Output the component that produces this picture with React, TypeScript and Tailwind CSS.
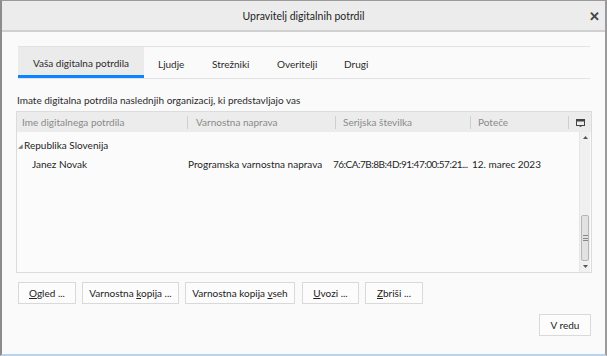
import React from "react";

const font = { fontFamily: 'Lato, "Noto Sans", sans-serif' };

function Btn({ children, className = "" }: { children: React.ReactNode; className?: string }) {
  return (
    <div
      className={
        "h-[22px] flex items-center justify-center border border-[#d9d9d9] bg-[#fcfcfc] text-[10px] text-[#222] pt-[1px] " +
        className
      }
    >
      {children}
    </div>
  );
}

export default function App() {
  return (
    <div
      className="w-[607px] h-[356px] flex flex-col bg-[#fafafa] border-l-2 border-t border-r-2 border-b-2 border-l-[#8c8c8c] border-t-[#9a9a9a] border-r-[#9a9a9a] border-b-[#b9d3ea] overflow-hidden"
      style={font}
    >
      {/* Title bar */}
      <div className="h-[31px] shrink-0 relative flex items-center justify-center bg-[#ececec] border-b-2 border-[#d0d0d0]">
        <span className="text-[10.5px] text-[#1e1e1e] pt-[3px]">Upravitelj digitalnih potrdil</span>
        <span className="absolute right-[5px] top-[9px] text-[13px] leading-none font-bold text-[#444]">✕</span>
      </div>

      <div className="flex flex-col pl-[14px] pr-[13px]">
        {/* Tabs */}
        <div className="mt-[14px] ml-[2px] mr-[2px] h-[33px] flex border-t border-b border-[#e2e2e2] text-[10px] text-[#2a2a2a]">
          <div className="w-[126px] h-full flex items-center justify-center bg-[#ebebeb] border-b-[3px] border-[#0a84ff] pt-[5px]">
            Vaša digitalna potrdila
          </div>
          <div className="flex items-center pt-[3px]">
            <span className="ml-[14px] w-[54px]">Ljudje</span>
            <span className="w-[65px]">Strežniki</span>
            <span className="w-[67px]">Overitelji</span>
            <span>Drugi</span>
          </div>
        </div>

        <div className="mt-[14px] ml-[1px] text-[10px] text-[#2a2a2a] leading-[14px]">
          Imate digitalna potrdila naslednjih organizacij, ki predstavljajo vas
        </div>

        {/* List box */}
        <div className="mt-[4px] h-[162px] border border-[#dcdcdc] bg-[#fbfbfb] flex flex-col">
          <div className="h-[20px] shrink-0 flex items-center bg-[#ececec] text-[10px] text-[#8a8a8a] pt-[1px]">
            <div className="w-[170px] pl-[5px]">Ime digitalnega potrdila</div>
            <div className="h-[13px] w-px bg-[#cfcfcf]" />
            <div className="w-[147px] pl-[8px]">Varnostna naprava</div>
            <div className="h-[13px] w-px bg-[#cfcfcf]" />
            <div className="w-[134px] pl-[7px]">Serijska številka</div>
            <div className="h-[13px] w-px bg-[#cfcfcf]" />
            <div className="w-[97px] pl-[7px]">Poteče</div>
            <div className="h-[13px] w-px bg-[#cfcfcf]" />
            <div className="flex-1 flex justify-center">
              <svg width="9" height="8" viewBox="0 0 9 8">
                <rect x="0.5" y="0.5" width="8" height="6" fill="none" stroke="#444" />
                <rect x="0.5" y="0.5" width="8" height="2" fill="#444" />
                <path d="M3 7h3l-1.5 1z" fill="#444" />
              </svg>
            </div>
          </div>
          <div className="flex flex-1 min-h-0">
            <div className="flex-1 text-[10px] text-[#1e1e1e]">
              <div className="h-[19px] flex items-center mt-[4px] pl-[1px]">
                <span className="text-[6px] text-[#777] mr-[1px]">◢</span>Republika Slovenija
              </div>
              <div className="h-[19px] flex items-center whitespace-nowrap">
                <span className="w-[171px] pl-[15px]">Janez Novak</span>
                <span className="w-[145px]">Programska varnostna naprava</span>
                <span className="w-[139px] tracking-[-0.5px]">76:CA:7B:8B:4D:91:47:00:57:21...</span>
                <span>12. marec 2023</span>
              </div>
            </div>
            {/* Scrollbar */}
            <div className="w-[11px] mr-[1px] flex flex-col bg-[#f0f0f0] border-l border-[#e6e6e6]">
              <div className="h-[10px] flex items-center justify-center">
                <svg width="5" height="3" viewBox="0 0 5 3"><path d="M0 3h5L2.5 0z" fill="#555" /></svg>
              </div>
              <div className="flex-1" />
              <div className="h-[46px] mx-[1px] rounded-[2px] border border-[#b5b5b5] bg-[#e2e2e2] flex items-center justify-center">
                <div className="w-[5px] h-[6px] flex flex-col justify-between">
                  <div className="h-px bg-[#888]" />
                  <div className="h-px bg-[#888]" />
                  <div className="h-px bg-[#888]" />
                </div>
              </div>
              <div className="h-[11px] flex items-center justify-center">
                <svg width="5" height="3" viewBox="0 0 5 3"><path d="M0 0h5L2.5 3z" fill="#555" /></svg>
              </div>
            </div>
          </div>
        </div>

        {/* Buttons */}
        <div className="mt-[9px] ml-[2px] flex gap-[6px]">
          <Btn className="w-[58px]"><span><u>O</u>gled ...</span></Btn>
          <Btn className="w-[97px]"><span>Varnostna <u>k</u>opija ...</span></Btn>
          <Btn className="w-[110px]"><span>Varnostna kopija <u>v</u>seh</span></Btn>
          <Btn className="w-[57px] ml-[1px]"><span><u>U</u>vozi ...</span></Btn>
          <Btn className="w-[58px]"><span><u>Z</u>briši ...</span></Btn>
        </div>

        <div className="mt-[10px] flex justify-end pr-[1px]">
          <Btn className="w-[52px]">V redu</Btn>
        </div>
      </div>
    </div>
  );
}
